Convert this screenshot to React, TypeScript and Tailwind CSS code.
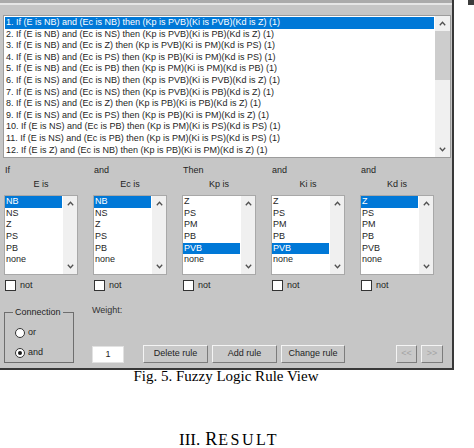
import React from "react";

const UI: React.CSSProperties = { fontFamily: '"Liberation Sans", Arial, sans-serif' };
const SERIF: React.CSSProperties = { fontFamily: '"Liberation Serif", "Times New Roman", serif' };

const rules = [
  "1. If (E is NB) and (Ec is NB) then (Kp is PVB)(Ki is PVB)(Kd is Z) (1)",
  "2. If (E is NB) and (Ec is NS) then (Kp is PVB)(Ki is PB)(Kd is Z) (1)",
  "3. If (E is NB) and (Ec is Z) then (Kp is PVB)(Ki is PM)(Kd is PS) (1)",
  "4. If (E is NB) and (Ec is PS) then (Kp is PB)(Ki is PM)(Kd is PS) (1)",
  "5. If (E is NB) and (Ec is PB) then (Kp is PM)(Ki is PM)(Kd is PB) (1)",
  "6. If (E is NS) and (Ec is NB) then (Kp is PVB)(Ki is PVB)(Kd is Z) (1)",
  "7. If (E is NS) and (Ec is NS) then (Kp is PVB)(Ki is PB)(Kd is Z) (1)",
  "8. If (E is NS) and (Ec is Z) then (Kp is PB)(Ki is PB)(Kd is Z) (1)",
  "9. If (E is NS) and (Ec is PS) then (Kp is PB)(Ki is PM)(Kd is Z) (1)",
  "10. If (E is NS) and (Ec is PB) then (Kp is PM)(Ki is PS)(Kd is PS) (1)",
  "11. If (E is NS) and (Ec is PB) then (Kp is PM)(Ki is PS)(Kd is PS) (1)",
  "12. If (E is Z) and (Ec is NB) then (Kp is PB)(Ki is PM)(Kd is Z) (1)",
];

const inItems = ["NB", "NS", "Z", "PS", "PB", "none"];
const outItems = ["Z", "PS", "PM", "PB", "PVB", "none"];

const columns = [
  { head: "If", label: "E is", items: inItems, sel: "NB" },
  { head: "and", label: "Ec is", items: inItems, sel: "NB" },
  { head: "Then", label: "Kp is", items: outItems, sel: "PVB" },
  { head: "and", label: "Ki is", items: outItems, sel: "PVB" },
  { head: "and", label: "Kd is", items: outItems, sel: "Z" },
];

function Up() {
  return (
    <svg width="7" height="5" viewBox="0 0 7 5">
      <polyline points="0.8,4.2 3.5,1.3 6.2,4.2" fill="none" stroke="#505050" strokeWidth="1.3" />
    </svg>
  );
}
function Down() {
  return (
    <svg width="7" height="5" viewBox="0 0 7 5">
      <polyline points="0.8,0.8 3.5,3.7 6.2,0.8" fill="none" stroke="#505050" strokeWidth="1.3" />
    </svg>
  );
}

function SmallList({ items, sel }: { items: string[]; sel: string }) {
  return (
    <div className="flex h-[80px] w-[74px] border border-[#a8a8a8] bg-white">
      <div className="flex flex-1 flex-col">
        {items.map((it) => (
          <div
            key={it}
            className={
              it === sel
                ? "h-[11.7px] pl-[1px] leading-[11.7px] bg-[#0078d7] text-white"
                : "h-[11.7px] pl-[1px] leading-[11.7px] text-[#1e1e1e]"
            }
          >
            {it}
          </div>
        ))}
      </div>
      <div className="ml-[1px] flex w-[14px] flex-col items-center justify-between bg-[#f0f0f0] pt-[5px] pb-[5px]">
        <Up />
        <Down />
      </div>
    </div>
  );
}

function Button({ label, w, disabled }: { label: string; w: string; disabled?: boolean }) {
  return (
    <div
      className={`flex h-[18px] ${w} items-center justify-center border border-t-[#f4f4f4] border-l-[#f4f4f4] border-r-[#7c7c7c] border-b-[#7c7c7c] bg-[#c9c9c9] ${
        disabled ? "text-[#a4a4a4]" : "text-[#1e1e1e]"
      }`}
    >
      {label}
    </div>
  );
}

export default function App() {
  return (
    <div className="relative h-[448px] w-[474px] overflow-hidden bg-white">
      <div className="absolute right-0 top-0 h-[5px] w-[6px] bg-[#3c3c3c]" />
      <div
        className="flex w-[454px] flex-col border-r-2 border-b-2 border-[#383838] bg-[#c6c6c6] text-[9px]"
        style={UI}
      >
        <div className="h-[3px] bg-[#ababab]" />
        <div className="h-[2px] bg-[#e6e6e6]" />

        {/* Rule list */}
        <div className="ml-[3px] mt-[10px] flex h-[143px] w-[448px] border border-[#9c9c9c] bg-white">
          <div className="flex flex-1 flex-col pt-[1px] pl-[1px]">
            {rules.map((r, i) => (
              <div
                key={i}
                className={
                  i === 0
                    ? "h-[11.6px] whitespace-nowrap pl-[1px] leading-[11.6px] bg-[#0078d7] text-white"
                    : "h-[11.6px] whitespace-nowrap pl-[1px] leading-[11.6px] text-[#1e1e1e]"
                }
              >
                {r}
              </div>
            ))}
          </div>
          <div className="ml-[1px] flex w-[15px] flex-col bg-[#f0f0f0]">
            <div className="flex h-[15px] items-center justify-center">
              <Up />
            </div>
            <div className="h-[49px] bg-[#cdcdcd]" />
            <div className="flex-1" />
            <div className="flex h-[15px] items-center justify-center">
              <Down />
            </div>
          </div>
        </div>

        {/* Antecedent / consequent columns */}
        <div className="ml-[4px] mt-[7px] flex gap-[15px] text-[#1e1e1e]">
          {columns.map((c, i) => (
            <div key={i} className="flex w-[74px] flex-col">
              <div className="h-[11px] pl-[1px] leading-[11px]">{c.head}</div>
              <div className="mt-[3px] h-[11px] text-center leading-[11px]">{c.label}</div>
              <div className="mt-[5px]">
                <SmallList items={c.items} sel={c.sel} />
              </div>
              <div className="mt-[5px] flex h-[11px] items-center gap-[4px] pl-[1px]">
                <div className="h-[11px] w-[11px] border border-[#333] bg-white" />
                <span className="leading-[11px]">not</span>
              </div>
            </div>
          ))}
        </div>

        {/* Bottom controls */}
        <div className="ml-[4px] mt-[14px] flex h-[58px] text-[#1e1e1e]">
          <div className="relative mt-[7px] h-[51px] w-[70px] border border-[#6e6e6e]">
            <div className="absolute left-[8px] top-[-6px] bg-[#c6c6c6] px-[2px] leading-[11px]">Connection</div>
            <div className="mt-[14px] ml-[10px] flex items-center gap-[3px]">
              <div className="h-[10px] w-[10px] rounded-full border border-[#333] bg-white" />
              <span className="leading-[11px]">or</span>
            </div>
            <div className="mt-[9px] ml-[10px] flex items-center gap-[3px]">
              <div className="flex h-[10px] w-[10px] items-center justify-center rounded-full border border-[#333] bg-white">
                <div className="h-[4px] w-[4px] rounded-full bg-[#1a1a1a]" />
              </div>
              <span className="leading-[11px]">and</span>
            </div>
          </div>
          <div className="ml-[18px] flex w-[32px] flex-col justify-between">
            <div className="h-[11px] leading-[11px] text-[#333]">Weight:</div>
            <div className="flex h-[17px] items-center justify-center border border-[#e2e2e2] bg-white">1</div>
          </div>
          <div className="ml-[19px] flex items-end gap-[4px]">
            <Button label="Delete rule" w="w-[65px]" />
            <Button label="Add rule" w="w-[65px]" />
            <Button label="Change rule" w="w-[64px]" />
          </div>
          <div className="ml-[51px] flex items-end gap-[4px]">
            <Button label="<<" w="w-[21px]" disabled />
            <Button label=">>" w="w-[22px]" disabled />
          </div>
        </div>
        <div className="h-[5px]" />
      </div>

      <div className="-mt-[1px] w-[452px] text-center text-[15px] leading-[15px] text-black" style={SERIF}>
        Fig. 5. Fuzzy Logic Rule View
      </div>

      <div className="ml-[179px] mt-[48px] flex h-[15px] items-baseline text-black" style={SERIF}>
        <span className="text-[17px] leading-[14px]">III.</span>
        <span className="ml-[5px] text-[18px] leading-[14px] tracking-[1px]">R</span>
        <span className="text-[16px] leading-[14px] tracking-[2.5px]">ESULT</span>
      </div>
    </div>
  );
}
